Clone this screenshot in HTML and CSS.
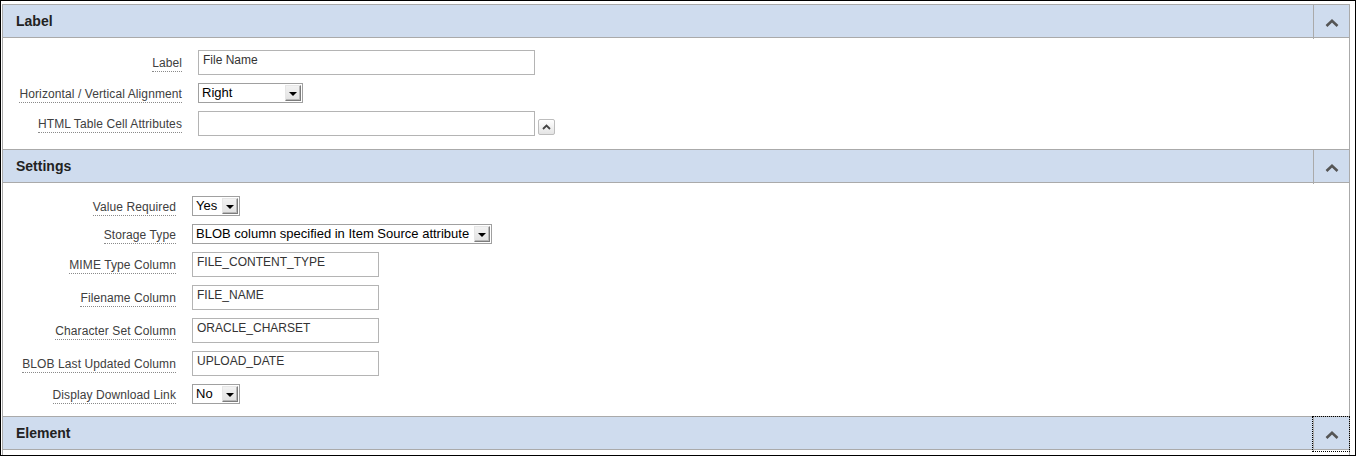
FILE: index.html
```html
<!DOCTYPE html>
<html>
<head>
<meta charset="utf-8">
<link rel="stylesheet" href="styles.css">
</head>
<body>
<div class="frame">
  <div class="panel">
    <section class="region">
      <div class="region-head">
        <h2 class="region-title">Label</h2>
        <button class="toggle" type="button"><svg width="14" height="8" viewBox="0 0 14 8"><path d="M1.5 7 L7 1.8 L12.5 7" fill="none" stroke="#555" stroke-width="2.6"/></svg></button>
      </div>
      <div class="form form-label">
        <div class="row">
          <div class="lbl"><span>Label</span></div>
          <div class="text w-wide">File Name</div>
        </div>
        <div class="row">
          <div class="lbl"><span>Horizontal / Vertical Alignment</span></div>
          <div class="select w-right"><span class="sel-text">Right</span><span class="sel-btn"><i></i></span></div>
        </div>
        <div class="row">
          <div class="lbl"><span>HTML Table Cell Attributes</span></div>
          <div class="text w-wide"></div>
          <button class="mini" type="button"><svg width="9" height="6" viewBox="0 0 9 6"><path d="M1 5 L4.5 1.5 L8 5" fill="none" stroke="#444" stroke-width="1.8"/></svg></button>
        </div>
      </div>
    </section>
    <section class="region">
      <div class="region-head">
        <h2 class="region-title">Settings</h2>
        <button class="toggle" type="button"><svg width="14" height="8" viewBox="0 0 14 8"><path d="M1.5 7 L7 1.8 L12.5 7" fill="none" stroke="#555" stroke-width="2.6"/></svg></button>
      </div>
      <div class="form form-settings">
        <div class="row">
          <div class="lbl"><span>Value Required</span></div>
          <div class="select w-small"><span class="sel-text">Yes</span><span class="sel-btn"><i></i></span></div>
        </div>
        <div class="row">
          <div class="lbl"><span>Storage Type</span></div>
          <div class="select w-storage"><span class="sel-text">BLOB column specified in Item Source attribute</span><span class="sel-btn"><i></i></span></div>
        </div>
        <div class="row">
          <div class="lbl"><span>MIME Type Column</span></div>
          <div class="text w-col">FILE_CONTENT_TYPE</div>
        </div>
        <div class="row">
          <div class="lbl"><span>Filename Column</span></div>
          <div class="text w-col">FILE_NAME</div>
        </div>
        <div class="row">
          <div class="lbl"><span>Character Set Column</span></div>
          <div class="text w-col">ORACLE_CHARSET</div>
        </div>
        <div class="row">
          <div class="lbl"><span>BLOB Last Updated Column</span></div>
          <div class="text w-col">UPLOAD_DATE</div>
        </div>
        <div class="row">
          <div class="lbl"><span>Display Download Link</span></div>
          <div class="select w-small"><span class="sel-text">No</span><span class="sel-btn"><i></i></span></div>
        </div>
      </div>
    </section>
    <section class="region">
      <div class="region-head">
        <h2 class="region-title">Element</h2>
        <button class="toggle focused" type="button"><svg width="14" height="8" viewBox="0 0 14 8"><path d="M1.5 7 L7 1.8 L12.5 7" fill="none" stroke="#555" stroke-width="2.6"/></svg></button>
      </div>
      <div class="form form-element"></div>
    </section>
  </div>
</div>
</body>
</html>
```

FILE: styles.css
```css
html, body {
  margin: 0;
  padding: 0;
  background: #fff;
}

.frame {
  width: 1356px;
  height: 456px;
  box-sizing: border-box;
  border: 1px solid #000;
  padding: 3px 5px 0 1px;
  overflow: hidden;
  background: #fff;
  font-family: "Liberation Sans", Arial, sans-serif;
}

.panel {
  border: 1px solid #aaaaaa;
  border-bottom: none;
}

.region-head {
  display: flex;
  height: 32px;
  background: #cfdcee;
  border-bottom: 1px solid #aaaaaa;
}

.region-title {
  flex: 1;
  margin: 0;
  padding-left: 13px;
  font-size: 14px;
  font-weight: bold;
  line-height: 33px;
  color: #222;
}

.toggle {
  width: 35px;
  height: 32px;
  margin: 0;
  padding: 2px 0 0 0;
  border: none;
  border-left: 1px solid #aaaaaa;
  background: transparent;
  display: flex;
  align-items: center;
  justify-content: center;
  box-sizing: content-box;
}

.toggle.focused {
  outline: 1px dotted #000;
  outline-offset: 0;
}

.form {
  display: flex;
  flex-direction: column;
  gap: 8px;
  border-bottom: 1px solid #aaaaaa;
}

.form-label {
  padding: 12px 0 13px;
}

.form-settings {
  padding: 13px 0 12px;
}

.form-element {
  height: 10px;
  border-bottom: none;
}

.row {
  display: flex;
  align-items: center;
}

.lbl {
  text-align: right;
  font-size: 12px;
  line-height: 14px;
  letter-spacing: 0.1px;
  color: #404040;
  padding-top: 1px;
}

.lbl span {
  border-bottom: 1px dotted #8a8a8a;
  padding-bottom: 1px;
}

.form-label .lbl {
  width: 179px;
  margin-right: 16px;
}

.form-settings .lbl {
  width: 173px;
  margin-right: 16px;
}

.text {
  height: 25px;
  box-sizing: border-box;
  border: 1px solid #b4b4b4;
  padding: 3px 4px 0;
  font-size: 12px;
  line-height: 13px;
  color: #333;
  white-space: nowrap;
  overflow: hidden;
}

.w-wide { width: 337px; }
.w-col { width: 187px; }

.select {
  height: 20px;
  box-sizing: border-box;
  border: 1px solid #a0a0a0;
  display: flex;
  align-items: center;
  padding: 0 1px 0 3px;
  font-size: 13px;
  color: #000;
}

.sel-text {
  flex: 1;
  white-space: nowrap;
  line-height: 16px;
}

.sel-btn {
  width: 16px;
  height: 16px;
  box-sizing: border-box;
  border: 1px solid;
  border-color: #e6e6e6 #7c7c7c #7c7c7c #e6e6e6;
  background: linear-gradient(#f2f2f2, #e2e2e2);
  display: flex;
  align-items: center;
  justify-content: center;
  box-shadow: inset -1px -1px 0 #b8b8b8;
}

.sel-btn i {
  width: 0;
  height: 0;
  border-left: 4px solid transparent;
  border-right: 4px solid transparent;
  border-top: 4px solid #000;
  margin-top: 1px;
}

.w-right { width: 105px; }
.w-small { width: 48px; }
.w-storage { width: 300px; }

.mini {
  width: 17px;
  height: 16px;
  margin: 6px 0 0 3px;
  padding: 0;
  box-sizing: border-box;
  border: 1px solid #bdbdbd;
  border-radius: 2px;
  background: linear-gradient(#ffffff, #e4e4e4);
  display: flex;
  align-items: center;
  justify-content: center;
}
```
